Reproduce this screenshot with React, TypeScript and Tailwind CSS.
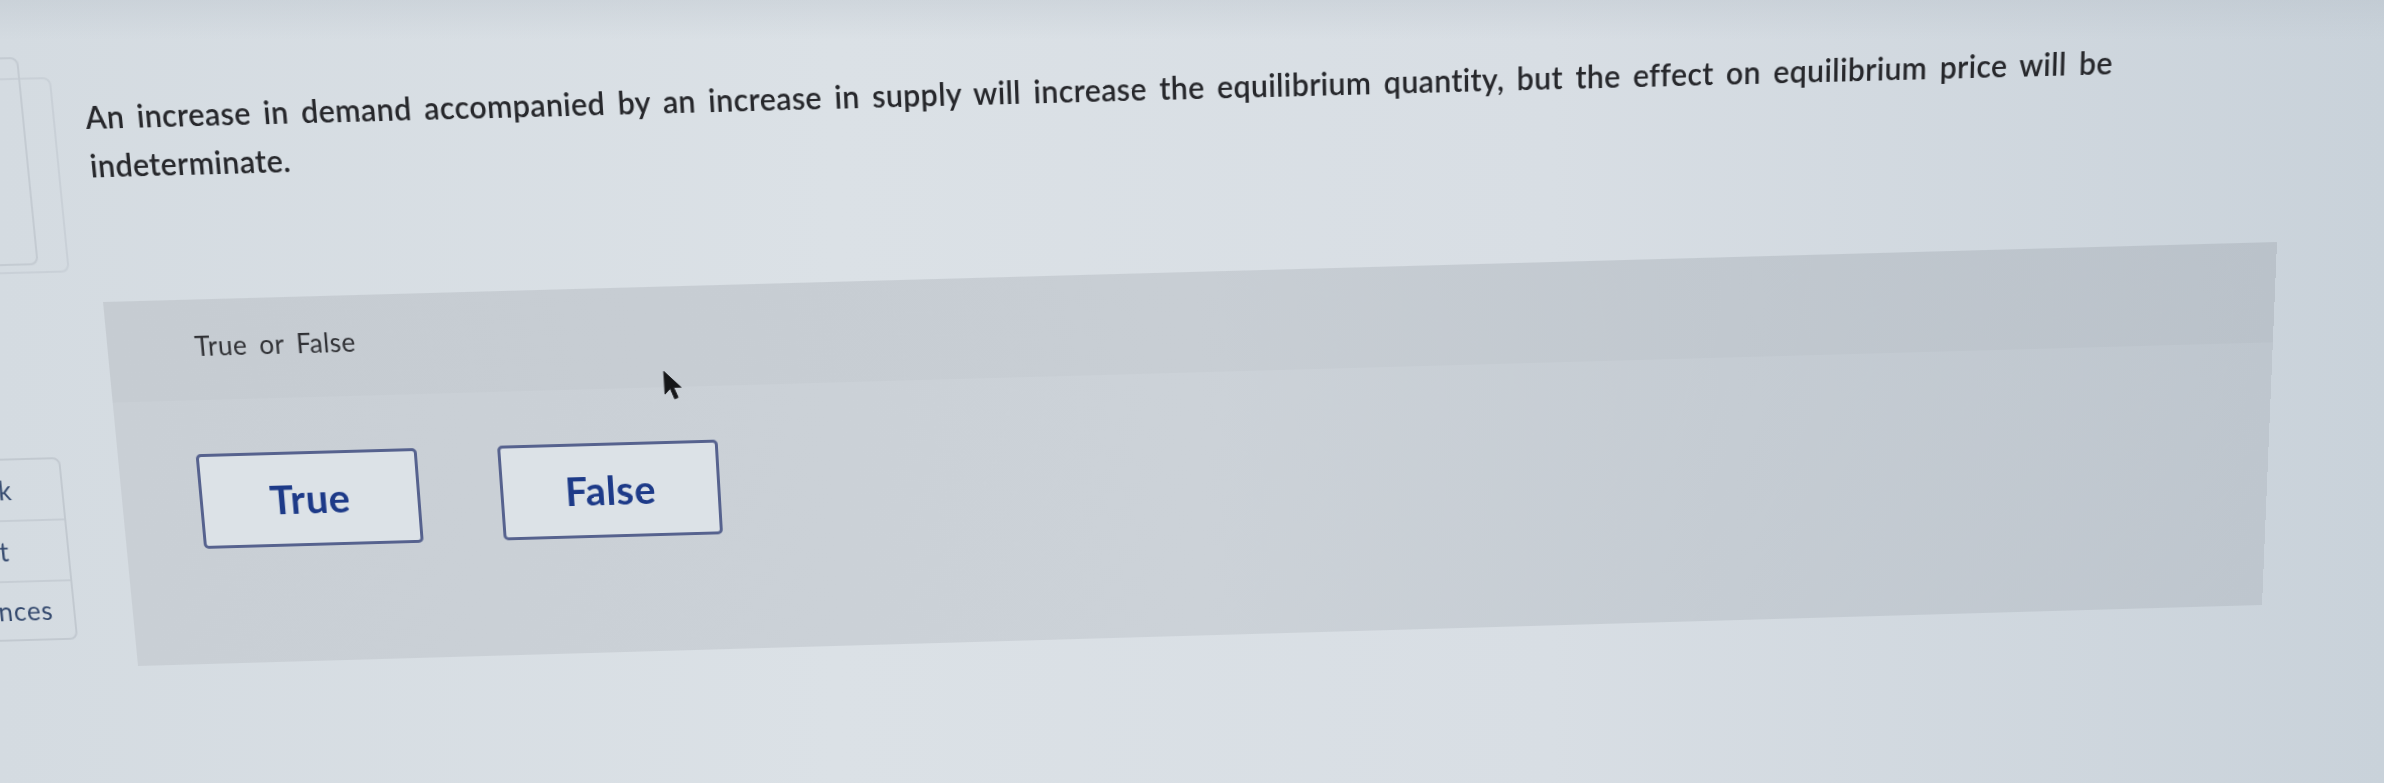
export default function App() {
  return (
    <div className="h-[783px] w-[2384px] overflow-hidden bg-[linear-gradient(180deg,rgba(180,189,198,0.3)_0px,rgba(180,189,198,0)_40px),linear-gradient(90deg,#d4dbe1_0%,#dbe1e6_35%,#d8dee4_65%,#c9d2da_100%)] font-['Lato','Liberation_Sans',sans-serif]">
      <div className="relative h-[783px] w-[2384px] origin-top-left [transform:matrix3d(1.026569,-0.027372,0,0.0000031504,0.106019,1.052316,0,0.000065371,0,0,1,0,-8.885,-5.506,0,1)]">
        <div className="flex">
          {/* left sidebar (mostly cut off) */}
          <aside className="ml-[-160px] w-[210px] shrink-0 pt-[60px]">
            <div className="relative pt-[20px]">
              <div className="ml-[60px] h-[190px] w-[150px] rounded-[8px] border-2 border-[#c9d0d7]" />
              <div className="absolute left-[60px] top-0 h-[202px] w-[120px] rounded-[8px] border-2 border-[#c4cbd2]" />
            </div>
            <div className="ml-[18px] mt-[183px] w-[164px] rounded-[8px] border-2 border-[#c2c9d0] text-[26px] tracking-[1px] text-[#34496e]">
              <div className="flex h-[62px] items-center justify-center border-b-2 border-[#c6cdd4] pr-[16px]">eBook</div>
              <div className="flex h-[62px] items-center justify-center border-b-2 border-[#c6cdd4] pr-[16px]">Print</div>
              <div className="flex h-[58px] items-center justify-center pr-[16px]">References</div>
            </div>
          </aside>

          {/* main question */}
          <main className="ml-[30px] w-[2175px] shrink-0 pt-[96px]">
            <p className="text-[30px] font-semibold leading-[47px] tracking-[0.35px] text-[#26272b] [word-spacing:4.5px]">
              An increase in demand accompanied by an increase in supply will increase the equilibrium quantity, but the effect on equilibrium price will be
              <br />
              indeterminate.
            </p>

            <div className="relative mt-[110px] h-[368px] bg-[linear-gradient(90deg,#c9cfd5_0%,#ccd2d8_50%,#bec6ce_100%)]">
              <div className="h-[100px] bg-[linear-gradient(90deg,#c6ccd2_0%,#c8ced4_50%,#bac2ca_100%)] pl-[87px] pt-[31px] text-[26px] leading-[30px] tracking-[0.5px] text-[#303135] [word-spacing:5px]">
                True or False
              </div>
              <div className="flex gap-[81px] pl-[78px] pt-[54px]">
                <button className="flex h-[96px] w-[222px] items-center justify-center rounded-[5px] border-[3px] border-[#56628e] bg-[#dce2e7] text-[40px] font-bold tracking-[0.5px] text-[#1d3a88]">
                  True
                </button>
                <button className="flex h-[96px] w-[222px] items-center justify-center rounded-[5px] border-[3px] border-[#56628e] bg-[#dce2e7] text-[40px] font-bold tracking-[0.5px] text-[#1d3a88]">
                  False
                </button>
              </div>

              {/* mouse pointer */}
              <svg className="absolute left-[552px] top-[83px]" width="20" height="32" viewBox="0 0 20 32">
                <path d="M1 1 L1 24 L6.5 18.5 L10.5 29 L14 27.5 L10 17.5 L17.5 17.5 Z" fill="#151618" stroke="#2a2b2e" strokeWidth="1" strokeLinejoin="round" />
              </svg>
            </div>
          </main>
        </div>
      </div>
    </div>
  );
}
